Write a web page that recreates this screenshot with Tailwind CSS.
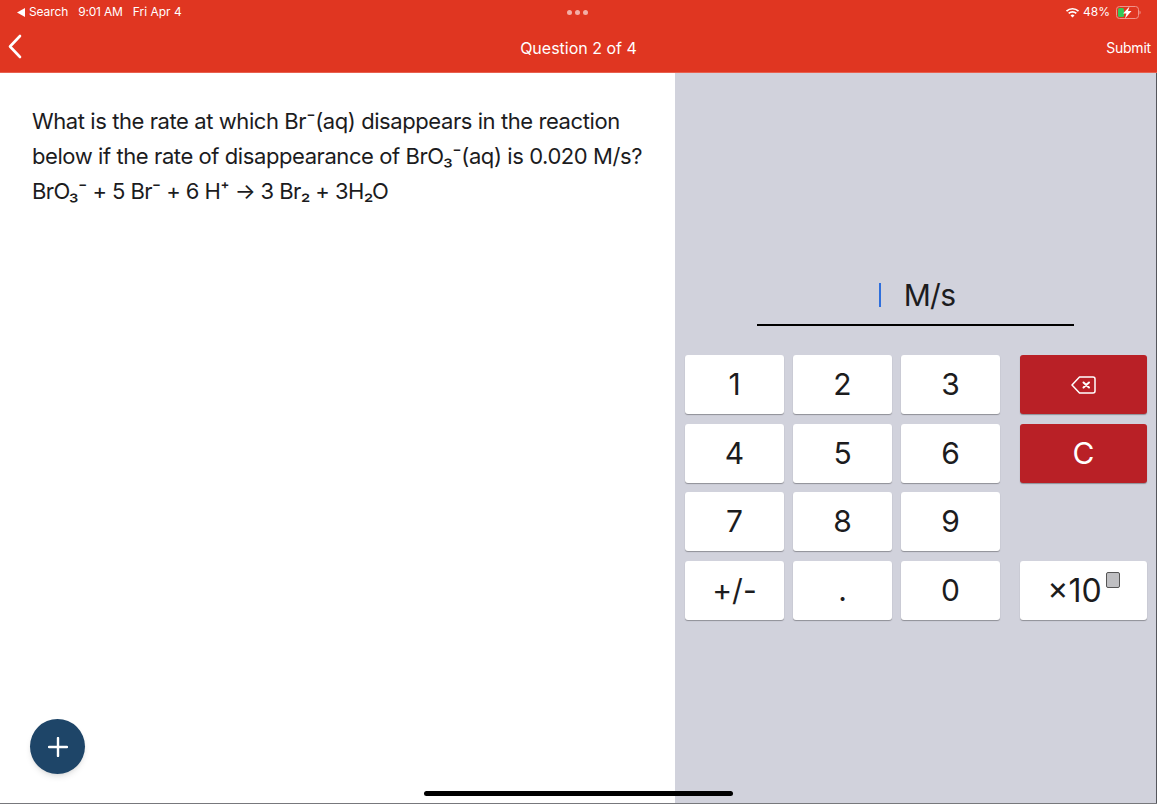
<!DOCTYPE html>
<html lang="en">

<head>
    <meta charset="UTF-8">
    <title>Question 2 of 4</title>
    <script src="https://cdn.jsdelivr.net/npm/@tailwindcss/browser@4"></script>
</head>

<body class="relative h-[804px] w-[1157px] overflow-hidden bg-white font-['Inter',sans-serif] text-[#1c1c1e]">

    <!-- Header -->
    <header class="h-[73px] bg-[#e03621] text-white border-b border-[#e8604f]">
        <div class="relative h-[24px] flex items-center pl-[17px] pr-[16px] text-[12px]">
            <svg class="w-[8px] h-[9px] mr-[4px]" viewBox="0 0 8 9"><path d="M0 4.5 8 0v9z" fill="#fff"/></svg>
            <span class="tracking-[-0.1px]">Search</span>
            <span class="ml-[10px] tracking-[-0.2px]">9:01 AM</span>
            <span class="ml-[10px]">Fri Apr 4</span>
            <div class="absolute left-[567px] top-[10px] flex gap-[3px]">
                <span class="w-[5px] h-[5px] rounded-full bg-white/60"></span>
                <span class="w-[5px] h-[5px] rounded-full bg-white/60"></span>
                <span class="w-[5px] h-[5px] rounded-full bg-white/60"></span>
            </div>
            <div class="ml-auto flex items-center">
                <svg class="w-[15px] h-[11px] mr-[3px]" viewBox="0 0 14 11" fill="none" stroke="#fff" stroke-width="1.7">
                    <path d="M1 4.2a8.6 8.6 0 0 1 12 0"/>
                    <path d="M3.2 6.4a5.4 5.4 0 0 1 7.6 0"/>
                    <path d="M7 10.6 5 8.500a2.900 2.900 0 0 1 4 0z" fill="#fff" stroke="none"/>
                </svg>
                <span>48%</span>
                <svg class="w-[25px] h-[13px] ml-[6px]" viewBox="0 0 25 13" fill="none">
                    <rect x="0.5" y="0.5" width="22" height="12" rx="3" stroke="#f0938a"/>
                    <rect x="2" y="2" width="6" height="9" rx="1.5" fill="#35c759"/>
                    <path d="M23.500 4.500c1.500.5 1.500 3.500 0 4z" fill="#f0938a"/>
                    <path d="M13.500 0.500 7 7.500h3.500l-1.500 5 6.500-7.500h-3.500z" fill="#fff"/>
                </svg>
            </div>
        </div>
        <div class="relative h-[48px] flex items-center justify-center">
            <svg class="absolute left-[8px] top-[10px] w-[14px] h-[25px]" viewBox="0 0 14 25" fill="none" stroke="#fff" stroke-width="2.6" stroke-linecap="round" stroke-linejoin="round">
                <path d="M12 2 2 12.500 12 23"/>
            </svg>
            <span class="text-[16px]">Question 2 of 4</span>
            <span class="absolute right-[6px] top-[13px] text-[14px] tracking-[-0.2px]">Submit</span>
        </div>
    </header>

    <main class="flex h-[731px]">
        <!-- Question -->
        <section class="relative w-[675px] pl-[32px] pt-[31px] text-[22px] leading-[35px] tracking-[-0.42px]">
            <p>What is the rate at which Br⁻(aq) disappears in the reaction</p>
            <p>below if the rate of disappearance of BrO₃⁻(aq) is 0.020 M/s?</p>
            <p class="tracking-[-0.6px]">BrO₃⁻ + 5 Br⁻ + 6 H⁺ → 3 Br₂ + 3H₂O</p>

            <button class="absolute left-[30px] top-[646px] w-[55px] h-[55px] rounded-full bg-[#1e4568] shadow-md flex items-center justify-center">
                <svg class="w-[20px] h-[20px]" viewBox="0 0 20 20" stroke="#fff" stroke-width="2.4" stroke-linecap="round"><path d="M10 1v18M1 10h18"/></svg>
            </button>
        </section>

        <!-- Answer pad -->
        <section class="flex-1 bg-[#d1d2dc] border-r border-[#55565c] pl-[10px] pr-[9px]">
            <div class="ml-[72px] mt-[193px] w-[317px] h-[60px] border-b-2 border-black flex items-center justify-center text-[30px] text-[#1c1c1e]">
                <span class="ml-[3px] w-[2px] h-[24px] bg-[#2f6fdc] mr-[23px]"></span>
                <span class="tracking-[-0.7px]">M/s</span>
            </div>

            <div class="mt-[29px] grid grid-cols-[99px_99px_99px_127px] gap-x-[9px] gap-y-[9.67px] auto-rows-[59px] text-[30px]">
                <button class="bg-white rounded-[3px] shadow-[0_1px_1px_#8e8f96]">1</button>
                <button class="bg-white rounded-[3px] shadow-[0_1px_1px_#8e8f96]">2</button>
                <button class="bg-white rounded-[3px] shadow-[0_1px_1px_#8e8f96]">3</button>
                <button class="ml-[11px] w-[127px] bg-[#b92026] rounded-[3px] shadow-[0_1px_1px_#8e8f96] flex items-center justify-center">
                    <svg class="w-[25px] h-[18px]" viewBox="0 0 25 18" fill="none" stroke="#fff" stroke-width="1.500" stroke-linejoin="round" stroke-linecap="round">
                        <path d="M1 9 8.500 1H22a2 2 0 0 1 2 2v12a2 2 0 0 1-2 2H8.500z"/>
                        <path d="m12.500 6.500 5.500 5M18 6.500l-5.500 5" stroke-width="2"/>
                    </svg>
                </button>
                <button class="bg-white rounded-[3px] shadow-[0_1px_1px_#8e8f96]">4</button>
                <button class="bg-white rounded-[3px] shadow-[0_1px_1px_#8e8f96]">5</button>
                <button class="bg-white rounded-[3px] shadow-[0_1px_1px_#8e8f96]">6</button>
                <button class="ml-[11px] w-[127px] bg-[#b92026] rounded-[3px] shadow-[0_1px_1px_#8e8f96] text-white">C</button>
                <button class="bg-white rounded-[3px] shadow-[0_1px_1px_#8e8f96]">7</button>
                <button class="bg-white rounded-[3px] shadow-[0_1px_1px_#8e8f96]">8</button>
                <button class="bg-white rounded-[3px] shadow-[0_1px_1px_#8e8f96]">9</button>
                <div></div>
                <button class="bg-white rounded-[3px] shadow-[0_1px_1px_#8e8f96]">+/-</button>
                <button class="bg-white rounded-[3px] shadow-[0_1px_1px_#8e8f96]">.</button>
                <button class="bg-white rounded-[3px] shadow-[0_1px_1px_#8e8f96]">0</button>
                <button class="ml-[11px] w-[127px] bg-white rounded-[3px] shadow-[0_1px_1px_#8e8f96] flex items-center justify-center">
                    <span class="mt-[2px] text-[32px]">×10</span>
                    <span class="ml-[4px] mb-[21px] w-[14px] h-[16px] bg-[#bfbfc2] border border-[#555] rounded-[2px]"></span>
                </button>
            </div>
        </section>
    </main>

    <!-- Home indicator -->
    <div class="absolute left-[424px] top-[791px] w-[309px] h-[5px] rounded-full bg-black"></div>
    <div class="absolute left-0 bottom-0 w-full h-[1px] bg-[#77787c]"></div>

</body>

</html>
